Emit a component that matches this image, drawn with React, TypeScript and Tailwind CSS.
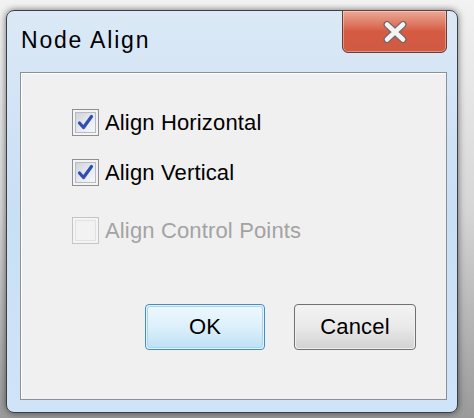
import React from 'react';

// ─── Checkbox (Win7 look) ─────────────────────────────────────────────────────

function CheckRow({ label, checked, disabled }: { label: string; checked?: boolean; disabled?: boolean }) {
  return (
    <div className="flex items-center gap-[6px]">
      <div
        className={
          disabled
            ? 'w-[27px] h-[27px] border border-[#c5c5c5] p-[2px] bg-[#f4f4f4]'
            : 'w-[27px] h-[27px] border border-[#8f8f8f] p-[2px] bg-[#f4f4f4]'
        }
      >
        <div
          className={
            disabled
              ? 'w-full h-full border border-[#e2e2e2] bg-[#f2f2f2]'
              : 'w-full h-full border border-[#b8bcc2] bg-gradient-to-br from-[#cfd4da] via-[#e6e9ee] to-[#f6f7f9] flex items-center justify-center'
          }
        >
          {checked && (
            <svg width="19" height="19" viewBox="0 0 19 19">
              <path
                d="M3.5 10 L7.5 14.5 L15.5 3.5"
                fill="none"
                stroke="#2f4fb0"
                strokeWidth="3.2"
                strokeLinecap="round"
                strokeLinejoin="round"
              />
            </svg>
          )}
        </div>
      </div>
      <span className={disabled ? 'text-[#a3a3a3]' : 'text-black'}>{label}</span>
    </div>
  );
}

// ─── Dialog ───────────────────────────────────────────────────────────────────

export default function App() {
  return (
    <div
      className="w-[474px] h-[418px] overflow-hidden bg-gradient-to-b from-[#f2f2f2] via-[#d6d6d6] to-[#9a9a9a] pt-[10px] pl-[6px]"
      style={{ fontFamily: '"Liberation Sans", Arial, sans-serif' }}
    >
      <div className="w-[452px] h-[403px] flex flex-col rounded-[8px] border border-[#3c3f44] bg-gradient-to-b from-[#dbe9f6] via-[#c9dff4] to-[#cfe4f8] shadow-[0_0_7px_rgba(0,0,0,0.55)] pl-[13px] pr-[10px] pb-[12px]">
        {/* Barra de título */}
        <div className="h-[61px] flex items-start justify-between">
          <span className="pt-[18px] pl-[1px] text-[23px] leading-[22px] tracking-[1.8px] text-black">Node Align</span>
          <div className="w-[105px] h-[43px] -mt-px rounded-b-[6px] border border-[#6e3b34] bg-gradient-to-b from-[#eaa898] via-[#d65a42] to-[#cf5a44] flex items-center justify-center shadow-[inset_0_0_0_1px_rgba(255,255,255,0.35)]">
            <svg width="28" height="22" viewBox="0 0 28 22">
              <path
                d="M6 3.5 L22 18.5 M22 3.5 L6 18.5"
                stroke="#6a6a6a"
                strokeWidth="7"
                strokeLinecap="round"
              />
              <path
                d="M6 3.5 L22 18.5 M22 3.5 L6 18.5"
                stroke="#f4f4f4"
                strokeWidth="4.5"
                strokeLinecap="round"
              />
            </svg>
          </div>
        </div>

        {/* Painel do conteúdo */}
        <div className="flex-1 flex flex-col border border-[#8a9097] bg-[#f0f0f0] shadow-[inset_1px_1px_0_#ffffff] text-[22px] leading-[26px] tracking-[0.15px]">
          <div className="flex flex-col pl-[51px] pt-[36px]">
            <CheckRow label="Align Horizontal" checked />
            <div className="h-[23px]" />
            <CheckRow label="Align Vertical" checked />
            <div className="h-[31px]" />
            <CheckRow label="Align Control Points" disabled />
          </div>

          <div className="flex-1" />

          {/* Botões */}
          <div className="flex justify-end gap-[29px] pr-[30px] pb-[49px]">
            <div className="w-[120px] h-[46px] rounded-[4px] border border-[#3d8fc7] p-px">
              <div className="w-full h-full rounded-[3px] border border-[#9fd9f6] bg-gradient-to-b from-[#edf7fd] via-[#dcf0fb] to-[#bfe2f5] flex items-center justify-center text-black">
                OK
              </div>
            </div>
            <div className="w-[122px] h-[46px] rounded-[4px] border border-[#707070] p-px">
              <div className="w-full h-full rounded-[3px] bg-gradient-to-b from-[#f3f3f3] via-[#e9e9e9] to-[#d3d3d3] flex items-center justify-center text-black">
                Cancel
              </div>
            </div>
          </div>
        </div>
      </div>
    </div>
  );
}
